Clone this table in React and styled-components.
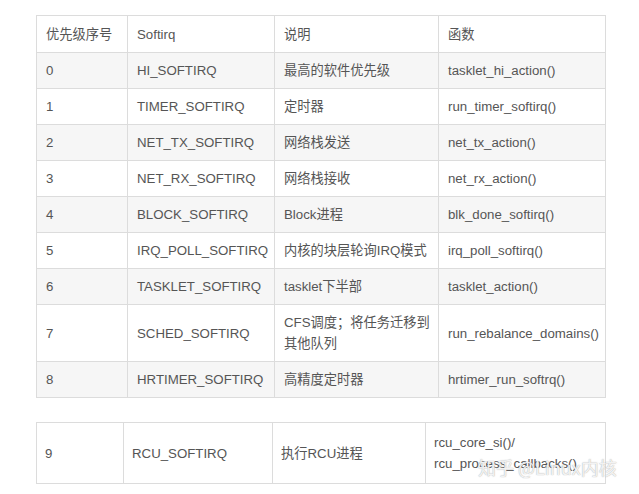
import React from "react";
import styled, { createGlobalStyle } from "styled-components";

const Global = createGlobalStyle`
  html, body { margin: 0; padding: 0; background: #fff; }
  body { font-family: "Liberation Sans", "Noto Sans CJK SC", sans-serif; }
`;

const Page = styled.div`
  position: relative;
  width: 639px;
  height: 494px;
  box-sizing: border-box;
  padding: 15px 0 0 36px;
  display: flex;
  flex-direction: column;
  gap: 24px;
`;

const Table = styled.table`
  border-collapse: collapse;
  table-layout: fixed;
  width: 569px;
  color: #555;
  font-size: 13.25px;
  line-height: 21px;
`;

const Row = styled.tr`
  background: ${(p) => (p.$striped ? "#f6f6f6" : "#fff")};
`;

const Cell = styled.td`
  border: 1px solid #dcdcdc;
  padding: ${(p) => (p.$tall ? "9px 3px 9px 8px" : "7px 3px 7px 9px")};
  vertical-align: middle;
  text-align: left;
  font-weight: normal;
  height: ${(p) => (p.$h ? `${p.$h}px` : "auto")};
  box-sizing: border-box;
  white-space: ${(p) => (p.$wrap ? "normal" : "nowrap")};
  overflow: visible;
`;

const Watermark = styled.div`
  position: absolute;
  left: 478px;
  top: 456px;
  font-family: "Noto Sans CJK SC", "Liberation Sans", sans-serif;
  font-size: 18px;
  line-height: 22px;
  color: rgba(255, 255, 255, 0.85);
  text-shadow: 0 0 1px rgba(150, 150, 150, 0.6), 0 0 1px rgba(150, 150, 150, 0.5);
  white-space: nowrap;
  pointer-events: none;
`;

const rows = [
  ["0", "HI_SOFTIRQ", "最高的软件优先级", "tasklet_hi_action()"],
  ["1", "TIMER_SOFTIRQ", "定时器", "run_timer_softirq()"],
  ["2", "NET_TX_SOFTIRQ", "网络栈发送", "net_tx_action()"],
  ["3", "NET_RX_SOFTIRQ", "网络栈接收", "net_rx_action()"],
  ["4", "BLOCK_SOFTIRQ", "Block进程", "blk_done_softirq()"],
  ["5", "IRQ_POLL_SOFTIRQ", "内核的块层轮询IRQ模式", "irq_poll_softirq()"],
  ["6", "TASKLET_SOFTIRQ", "tasklet下半部", "tasklet_action()"],
  ["7", "SCHED_SOFTIRQ", "CFS调度；将任务迁移到其他队列", "run_rebalance_domains()"],
  ["8", "HRTIMER_SOFTIRQ", "高精度定时器", "hrtimer_run_softrq()"],
];

export default function App() {
  return (
    <>
      <Global />
      <Page>
        <Table>
          <colgroup>
            <col style={{ width: 91 }} />
            <col style={{ width: 147 }} />
            <col style={{ width: 164 }} />
            <col style={{ width: 167 }} />
          </colgroup>
          <thead>
            <Row>
              <Cell as="th" $h={37}>优先级序号</Cell>
              <Cell as="th" $h={37}>Softirq</Cell>
              <Cell as="th" $h={37}>说明</Cell>
              <Cell as="th" $h={37}>函数</Cell>
            </Row>
          </thead>
          <tbody>
            {rows.map((r, i) => (
              <Row key={r[0]} $striped={i % 2 === 0}>
                {r.map((c, j) => (
                  <Cell key={j} $h={i === 7 ? 56 : 36} $wrap={j === 2}>
                    {c}
                  </Cell>
                ))}
              </Row>
            ))}
          </tbody>
        </Table>
        <Table>
          <colgroup>
            <col style={{ width: 87 }} />
            <col style={{ width: 149 }} />
            <col style={{ width: 153 }} />
            <col style={{ width: 180 }} />
          </colgroup>
          <tbody>
            <Row>
              <Cell $tall $h={60}>9</Cell>
              <Cell $tall $h={60}>RCU_SOFTIRQ</Cell>
              <Cell $tall $h={60}>执行RCU进程</Cell>
              <Cell $tall $h={60}>
                rcu_core_si()/
                <br />
                rcu_process_callbacks()
              </Cell>
            </Row>
          </tbody>
        </Table>
        <Watermark>知乎 @Linux内核</Watermark>
      </Page>
    </>
  );
}
